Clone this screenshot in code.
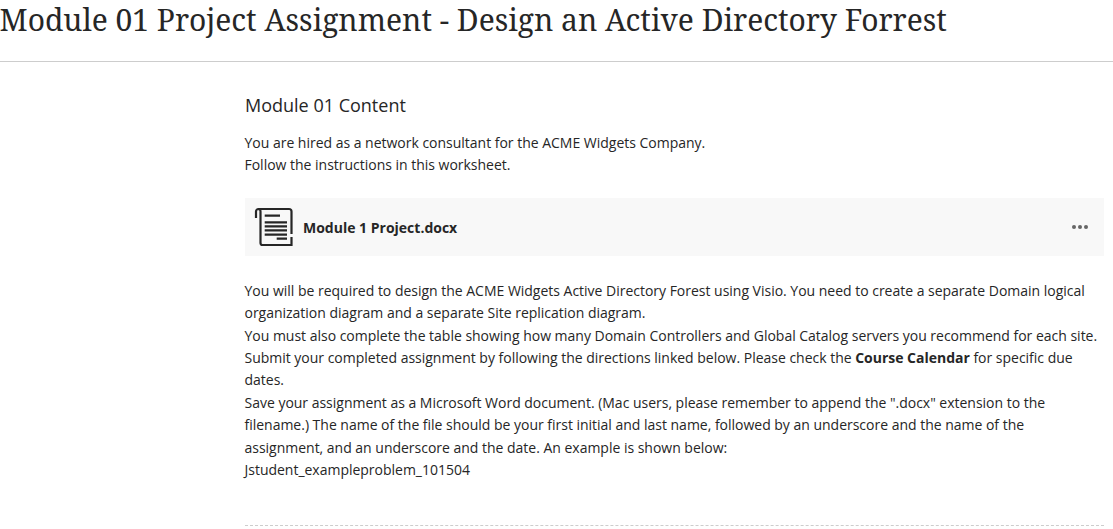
<style>
    :global(body) {
        background: #fff;
        overflow: hidden;
    }

    .page {
        height: 529px;
        overflow: hidden;
        font-family: "Open Sans", sans-serif;
        color: #262626;
    }

    header {
        height: 61px;
        border-bottom: 1px solid #cdcdcd;
    }

    h1 {
        margin: 0 0 0 -0.5px;
        font-family: "Noto Serif", "DejaVu Serif", serif;
        font-size: 30px;
        font-weight: 400;
        line-height: 39px;
        letter-spacing: -0.01px;
    }

    .content {
        margin-left: 245px;
        width: 859px;
        padding-top: 31px;
        font-size: 14px;
        line-height: 22.4px;
    }

    h2 {
        margin: 0 0 15px;
        font-size: 18px;
        font-weight: 400;
        line-height: 24px;
    }

    p {
        margin: 0 0 0 -0.5px;
        letter-spacing: -0.014px;
    }

    .file {
        display: flex;
        align-items: center;
        height: 58px;
        margin: 21px 0 24px;
        padding: 0 16px 0 9px;
        background: #f8f8f8;
    }

    .file svg {
        width: 40px;
        height: 40px;
    }

    .file strong {
        margin-left: 9px;
        padding-top: 2px;
        flex: 1;
    }

    .dots {
        display: flex;
        gap: 2px;
    }

    .dots i {
        width: 4px;
        height: 4px;
        border-radius: 50%;
        background: #666;
    }

    .rule {
        margin-top: 44px;
        border-top: 1px dashed #cdcdcd;
    }
</style>

<div class="page">
    <header>
        <h1>Module 01 Project Assignment - Design an Active Directory Forrest</h1>
    </header>
    <main class="content">
        <h2>Module 01 Content</h2>
        <p>You are hired as a network consultant for the ACME Widgets Company.<br>Follow the instructions in this worksheet.</p>
        <div class="file">
            <svg viewBox="0 0 40 40" fill="none" stroke="#262626" stroke-width="2.2">
                <path d="M2 11V4.500a2.500 2.500 0 0 1 2.500-2.500H35a2.500 2.500 0 0 1 2.500 2.500V27M37.500 30V38H8.500a2 2 0 0 1-2-2V4.500a2.200 2.200 0 0 0-2-2.500" />
                <path d="M10.700 8.700H26M10.700 15.300H33M10.700 19.300H33M10.700 23.300H33M10.700 27.600H33M22.700 31.700H33" />
            </svg>
            <strong>Module 1 Project.docx</strong>
            <div class="dots"><i></i><i></i><i></i></div>
        </div>
        <p>You will be required to design the ACME Widgets Active Directory Forest using Visio. You need to create a separate Domain logical organization diagram and a separate Site replication diagram.<br>You must also complete the table showing how many Domain Controllers and Global Catalog servers you recommend for each site.<br>Submit your completed assignment by following the directions linked below. Please check the <strong>Course Calendar</strong> for specific due dates.<br>Save your assignment as a Microsoft Word document. (Mac users, please remember to append the ".docx" extension to the filename.) The name of the file should be your first initial and last name, followed by an underscore and the name of the assignment, and an underscore and the date. An example is shown below:<br>Jstudent_exampleproblem_101504</p>
        <div class="rule"></div>
    </main>
</div>
